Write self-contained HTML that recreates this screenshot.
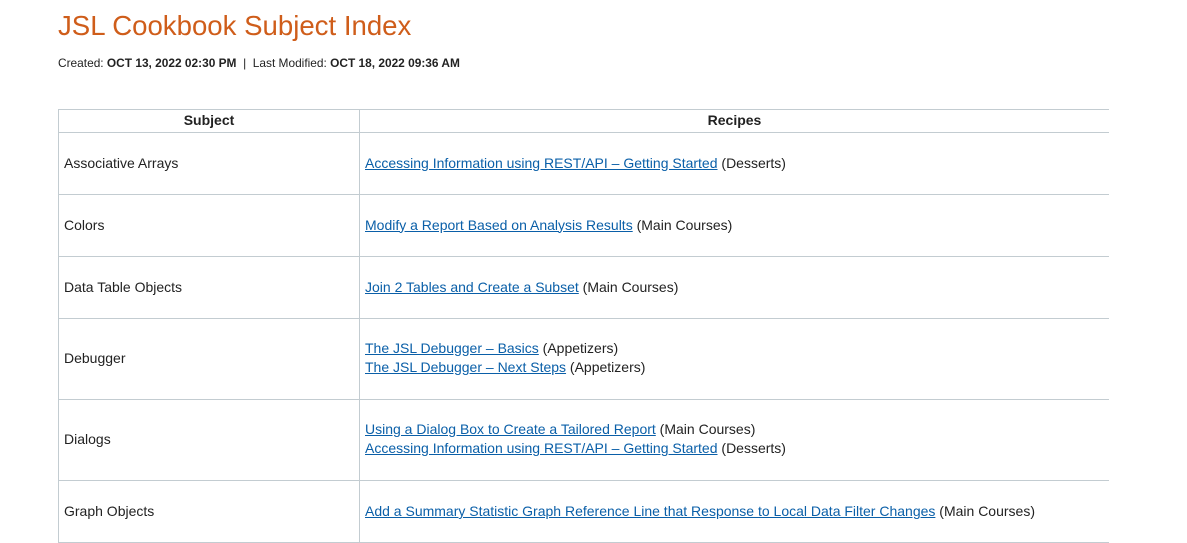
<!DOCTYPE html>
<html><head><style>
body{margin:0;background:#fff;font-family:"Liberation Sans",Arial,sans-serif;color:#222;overflow:hidden;width:1187px;height:515px}
h1{position:absolute;left:58px;top:10px;margin:0;font-weight:normal;font-size:27.6px;color:#cf5d1a}
.meta{position:absolute;left:58px;top:56px;font-size:11.9px;color:#222}
table{position:absolute;left:58px;top:109px;border-collapse:collapse;font-size:14px;width:1051px}
td,th{border:1px solid #c3ccd1;padding:0 5px 2px;vertical-align:middle;text-align:left}
tr td:last-child,tr th:last-child{border-right:none}
th{font-weight:bold;text-align:center;height:20px}
td:first-child,th:first-child{width:290px}
a{color:#0a5fa8;text-decoration:underline}
.line{line-height:19.5px}
</style></head><body>
<h1>JSL Cookbook Subject Index</h1>
<div class="meta">Created: <b>OCT 13, 2022 02:30 PM</b> &nbsp;|&nbsp; Last Modified: <b>OCT 18, 2022 09:36 AM</b></div>
<table>
<tr><th>Subject</th><th>Recipes</th></tr>
<tr style="height:62px"><td>Associative Arrays</td><td><a>Accessing Information using REST/API – Getting Started</a> (Desserts)</td></tr>
<tr style="height:62px"><td>Colors</td><td><a>Modify a Report Based on Analysis Results</a> (Main Courses)</td></tr>
<tr style="height:62px"><td>Data Table Objects</td><td><a>Join 2 Tables and Create a Subset</a> (Main Courses)</td></tr>
<tr style="height:81px"><td>Debugger</td><td class="line"><a>The JSL Debugger – Basics</a> (Appetizers)<br><a>The JSL Debugger – Next Steps</a> (Appetizers)</td></tr>
<tr style="height:81px"><td>Dialogs</td><td class="line"><a>Using a Dialog Box to Create a Tailored Report</a> (Main Courses)<br><a>Accessing Information using REST/API – Getting Started</a> (Desserts)</td></tr>
<tr style="height:62px"><td style="vertical-align:top;padding-top:22px">Graph Objects</td><td style="vertical-align:top;padding-top:22px"><a>Add a Summary Statistic Graph Reference Line that Response to Local Data Filter Changes</a> (Main Courses)</td></tr>
</table>
</body></html>
